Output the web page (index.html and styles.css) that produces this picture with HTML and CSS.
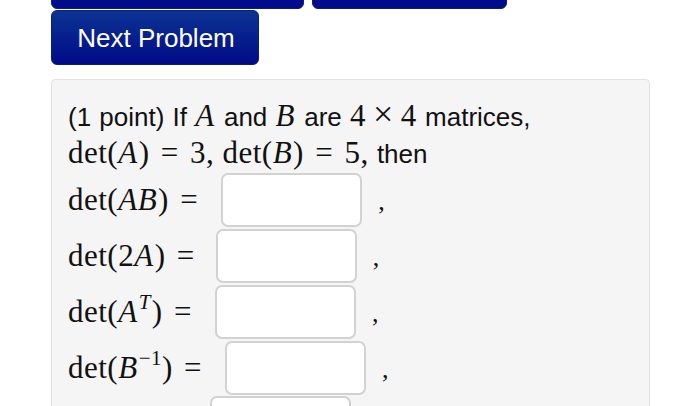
FILE: index.html
```html
<!DOCTYPE html>
<html>
<head>
<meta charset="utf-8">
<link rel="stylesheet" href="styles.css">
</head>
<body>
<div class="top-row">
  <span class="btn btn-wide"></span>
  <span class="btn btn-mid"></span>
</div>
<button class="btn next">Next Problem</button>
<div class="panel">
  <p class="q">(1 point) If <span class="m"><i>A</i></span> and <span class="m"><i>B</i></span> are <span class="m">4<span class="op times">×</span>4</span> matrices,<br><span class="m">det(<i>A</i>) <span class="op">=</span> 3, det(<i>B</i>) <span class="op">=</span> 5,</span> then</p>
  <div class="row"><span class="m">det(<i>AB</i>) <span class="op">=</span></span><input class="ans" type="text"><span class="comma">,</span></div>
  <div class="row"><span class="m">det(2<i>A</i>) <span class="op">=</span></span><input class="ans ans-2" type="text"><span class="comma">,</span></div>
  <div class="row"><span class="m">det(<i>A</i><sup><i>T</i></sup>) <span class="op">=</span></span><input class="ans" type="text"><span class="comma">,</span></div>
  <div class="row"><span class="m">det(<i>B</i><sup>−1</sup>) <span class="op">=</span></span><input class="ans" type="text"><span class="comma">,</span></div>
  <div class="row row-last"><input class="ans ans-last" type="text"></div>
</div>
</body>
</html>
```
FILE: styles.css
```css
html, body {
  margin: 0;
  padding: 0;
  background: #ffffff;
  overflow: hidden;
}
body {
  font-family: "Liberation Sans", Arial, sans-serif;
  color: #111;
  padding-left: 51px;
}
.btn {
  display: block;
  box-sizing: border-box;
  border: 1px solid #0a1f78;
  border-radius: 6px;
  background: linear-gradient(#0c3394, #000b87);
}
.top-row {
  display: flex;
  gap: 8px;
  margin-top: -31px;
}
.top-row .btn {
  height: 40px;
  background: #010c8c;
}
.btn-wide { width: 253px; }
.btn-mid { width: 195px; }
.next {
  margin-top: 1px;
  width: 208px;
  height: 55px;
  padding: 2px 0 0 2px;
  color: #fff;
  font-family: "Liberation Sans", Arial, sans-serif;
  font-size: 26px;
  text-align: center;
}
.panel {
  box-sizing: border-box;
  width: 599px;
  margin-top: 14px;
  padding: 18px 16px 0 16px;
  height: 400px;
  background: #f5f5f5;
  border: 1px solid #e2e2e2;
  border-radius: 4px;
}
.q {
  margin: 0;
  font-size: 26px;
  line-height: 36px;
  word-spacing: 1px;
}
.m {
  font-family: "Liberation Serif", "Times New Roman", serif;
  font-size: 31px;
  letter-spacing: 0.5px;
  word-spacing: 0;
}
.m i { padding-right: 1px; }
.op { margin: 0 3px; }
.times {
  font-size: 36px;
  line-height: 0;
  margin: 0 7px;
}
.m sup {
  font-size: 21px;
  line-height: 0;
  vertical-align: 13px;
}
.row {
  display: flex;
  align-items: center;
  height: 56px;
}
.ans {
  box-sizing: border-box;
  width: 141px;
  height: 54px;
  margin-left: 20px;
  background: #fff;
  border: 2px solid #d2d2d2;
  border-radius: 7px;
  padding: 0;
}
.ans-2 { margin-left: 18px; }
.row-last {
  align-items: flex-start;
}
.ans-last {
  margin-left: 142px;
}
.comma {
  font-family: "Liberation Serif", "Times New Roman", serif;
  font-size: 26px;
  margin-left: 16px;
  padding-top: 4px;
}
```
